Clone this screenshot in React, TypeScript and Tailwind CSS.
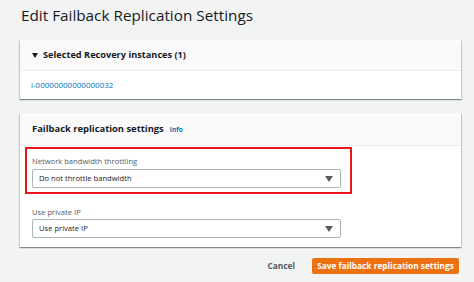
import React from 'react';

function Caret() {
  return (
    <svg width="8" height="6" viewBox="0 0 8 6" className="shrink-0">
      <path d="M0 0 L8 0 L4 6 Z" fill="#545b64" />
    </svg>
  );
}

function SelectBox({ value }: { value: string }) {
  return (
    <div className="flex items-center justify-between h-[19px] w-[309px] border border-[#aab7b8] rounded-[2px] bg-white pl-[6px] pr-[7px]">
      <span className="text-[7.6px] text-[#16191f]">{value}</span>
      <Caret />
    </div>
  );
}

const panelShadow =
  'shadow-[0_1px_1px_0_rgba(0,28,36,0.3),1px_1px_1px_0_rgba(0,28,36,0.15),-1px_1px_1px_0_rgba(0,28,36,0.15)]';

export default function App() {
  return (
    <div className="w-[474px] h-[282px] overflow-hidden bg-[#f2f3f3] font-['Open_Sans',sans-serif]">
      <div className="ml-[20px] w-[441px]">
        <h1 className="h-[40px] pt-[3px] pl-[1px] text-[15.3px] leading-[24px] text-[#16191f]">
          Edit Failback Replication Settings
        </h1>

        <div className={`bg-white ${panelShadow}`}>
          <div className="flex items-center gap-[5px] h-[31px] px-[12px] bg-[#fafafa] border-b border-[#eaeded]">
            <svg width="6" height="5" viewBox="0 0 6 5">
              <path d="M0 0 L6 0 L3 5 Z" fill="#16191f" />
            </svg>
            <span className="text-[9.2px] font-bold text-[#16191f]">Selected Recovery instances (1)</span>
          </div>
          <div className="h-[28px] flex items-center px-[11px]">
            <span className="text-[8px] text-[#0073bb]">i-00000000000000032</span>
          </div>
        </div>

        <div className={`mt-[14px] bg-white ${panelShadow}`}>
          <div className="flex items-baseline gap-[6px] h-[33px] pt-[9px] px-[12px] bg-[#fafafa] border-b border-[#eaeded]">
            <span className="text-[9.4px] font-bold text-[#16191f]">Failback replication settings</span>
            <span className="text-[6.5px] font-bold text-[#0073bb]">Info</span>
          </div>
          <div className="pl-[5px] pt-[1px] pb-[9px]">
            <div className="w-[327px] border-2 border-[#e8131b] pl-[5px] pt-[6px] pb-[4px]">
              <div className="text-[7.6px] leading-[12px] text-[#545b64] mb-[2px]">Network bandwidth throttling</div>
              <SelectBox value="Do not throttle bandwidth" />
            </div>
            <div className="ml-[7px] mt-[12px]">
              <div className="text-[7.6px] leading-[12px] text-[#545b64] mb-[1px]">Use private IP</div>
              <SelectBox value="Use private IP" />
            </div>
          </div>
        </div>

        <div className="flex items-center justify-end gap-[17px] mt-[11px] pr-[2px]">
          <span className="text-[8.3px] font-bold text-[#545b64]">Cancel</span>
          <div className="h-[16px] w-[147px] flex items-center justify-center bg-[#ec7211] rounded-[2px]">
            <span className="text-[8.3px] font-bold text-white">Save failback replication settings</span>
          </div>
        </div>
      </div>
    </div>
  );
}
